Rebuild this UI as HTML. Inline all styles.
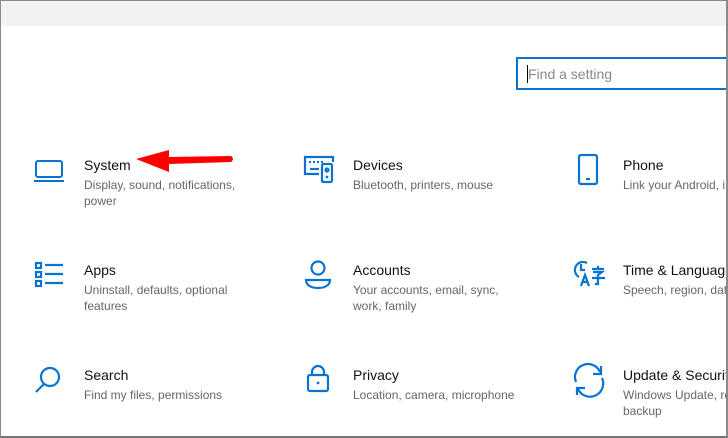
<!DOCTYPE html>
<html><head><style>
body{margin:0;width:728px;height:438px;overflow:hidden;background:#fff;font-family:"Liberation Sans",sans-serif;position:relative}
.wrap{position:absolute;left:0;top:0;width:728px;height:438px;overflow:hidden}
.frame{position:absolute;left:0;top:0;width:725px;height:435px;border:1px solid #8a8a8a;border-bottom:2px solid #777;border-right:2px solid #8a8a8a;z-index:5}
.band{position:absolute;left:1px;top:1px;width:725px;height:25px;background:#f2f2f2}
.search{position:absolute;left:516px;top:57px;width:215px;height:29px;border:2px solid #0a73cf}
.search span{position:absolute;left:10px;top:7px;font-size:14px;color:#8a8a8a}
.search i{position:absolute;left:9px;top:6px;width:1px;height:18px;background:#000}
.t{position:absolute;font-size:14px;color:#111;white-space:nowrap}
.d{position:absolute;font-size:12px;color:#666;line-height:16px;white-space:nowrap}
svg.ic{position:absolute;overflow:visible}
</style></head><body><div class="wrap">
<div class="band"></div>
<div class="frame"></div>
<div class="search"><i></i><span>Find a setting</span></div>

<svg class="ic" style="left:32px;top:155px" width="36" height="30" fill="none" stroke="#0a73cf" stroke-width="2"><rect x="4" y="6" width="26" height="16" rx="2"/><line x1="2" y1="26" x2="32" y2="26"/></svg>
<div class="t" style="left:84px;top:157px">System</div>
<div class="d" style="left:84px;top:177px">Display, sound, notifications,<br>power</div>

<svg style="position:absolute;left:134px;top:149px" width="102" height="28"><path d="M2 10 L35 1 L35 8 L97 7 Q101 10 97 13 L35 15 L35 23 Z" fill="#f00"/></svg>

<svg class="ic" style="left:302px;top:155px" width="36" height="32" fill="none" stroke="#0a73cf" stroke-width="2.2"><path d="M17 19 H3 V2 H31 V7"/><rect x="20" y="9" width="10" height="18" rx="1.5"/><circle cx="25" cy="15" r="1.5"/><g fill="#0a73cf" stroke="none"><circle cx="8" cy="7" r="1.2"/><circle cx="12" cy="7" r="1.2"/><circle cx="16" cy="7" r="1.2"/><circle cx="20" cy="7" r="1.2"/><circle cx="25" cy="22" r="1.4"/></g><line x1="8" y1="14" x2="17" y2="14"/></svg>
<div class="t" style="left:353px;top:157px">Devices</div>
<div class="d" style="left:353px;top:177px">Bluetooth, printers, mouse</div>

<svg class="ic" style="left:578px;top:154px" width="24" height="32" fill="none" stroke="#0a73cf" stroke-width="2.2"><rect x="1" y="1" width="18" height="29" rx="2"/><line x1="8" y1="25" x2="12" y2="25"/></svg>
<div class="t" style="left:623px;top:157px">Phone</div>
<div class="d" style="left:623px;top:177px">Link your Android, iPhone</div>

<svg class="ic" style="left:35px;top:262px" width="32" height="28" fill="none" stroke="#0a73cf" stroke-width="2.2"><rect x="1" y="1" width="5" height="5"/><rect x="1" y="10" width="5" height="5"/><rect x="1" y="19" width="5" height="5"/><line x1="10" y1="3" x2="28" y2="3"/><line x1="10" y1="12" x2="28" y2="12"/><line x1="10" y1="21" x2="28" y2="21"/></svg>
<div class="t" style="left:84px;top:262px">Apps</div>
<div class="d" style="left:84px;top:282px">Uninstall, defaults, optional<br>features</div>

<svg class="ic" style="left:305px;top:259px" width="30" height="32" fill="none" stroke="#0a73cf" stroke-width="2.2"><circle cx="13" cy="9" r="6.5"/><path d="M1 21 H25 C25 26 20 29 13 29 C6 29 1 26 1 21 Z"/></svg>
<div class="t" style="left:353px;top:262px">Accounts</div>
<div class="d" style="left:353px;top:282px">Your accounts, email, sync,<br>work, family</div>

<svg class="ic" style="left:573px;top:259px" width="34" height="32" fill="none" stroke="#0a73cf" stroke-width="2.2"><path d="M14 4 A8 8 0 1 0 6 18"/><path d="M8 5 V11 H12"/><path d="M8 27 L12 16 L16 27 M9.5 23 H14.5"/><path d="M19 10 H31 M25 7 V10 M20 13 H29 L25 16 V25 L22 25 M19 19 H32"/></svg>
<div class="t" style="left:623px;top:262px">Time &amp; Language</div>
<div class="d" style="left:623px;top:282px">Speech, region, date</div>

<svg class="ic" style="left:35px;top:365px" width="32" height="32" fill="none" stroke="#0a73cf" stroke-width="2.2"><circle cx="15" cy="12" r="9"/><line x1="9" y1="19" x2="1" y2="27"/></svg>
<div class="t" style="left:84px;top:367px">Search</div>
<div class="d" style="left:84px;top:387px">Find my files, permissions</div>

<svg class="ic" style="left:305px;top:364px" width="28" height="34" fill="none" stroke="#0a73cf" stroke-width="2.2"><path d="M7 11 V8 A6 6 0 0 1 19 8 V11"/><rect x="3" y="11" width="20" height="16" rx="2"/><circle cx="13" cy="19" r="1.4" fill="#0a73cf" stroke="none"/></svg>
<div class="t" style="left:353px;top:367px">Privacy</div>
<div class="d" style="left:353px;top:387px">Location, camera, microphone</div>

<svg class="ic" style="left:572px;top:364px" width="34" height="34" fill="none" stroke="#0a73cf" stroke-width="2.2"><path d="M4 18 A13 13 0 0 1 28 8"/><path d="M29 2 V10 H21"/><path d="M30 14 A13 13 0 0 1 6 25"/><path d="M5 31 V24 H13"/></svg>
<div class="t" style="left:623px;top:367px">Update &amp; Security</div>
<div class="d" style="left:623px;top:387px">Windows Update, recovery,<br>backup</div>
</div></body></html>
